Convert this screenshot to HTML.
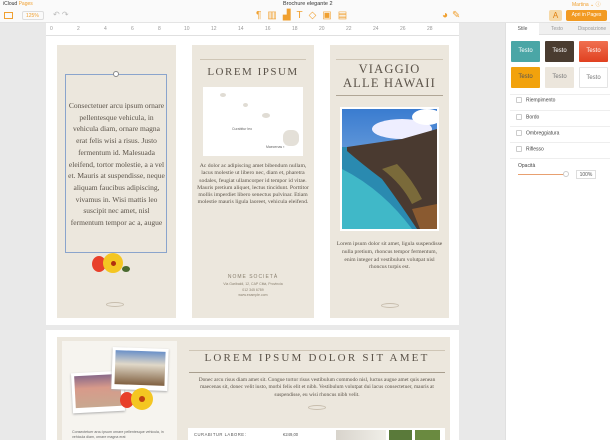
<!DOCTYPE html>
<html><head><meta charset="utf-8"><style>
*{margin:0;padding:0;box-sizing:border-box}
body{width:610px;height:440px;overflow:hidden;background:#fff;font-family:"Liberation Sans",sans-serif;position:relative}
.a{position:absolute}
.serif{font-family:"Liberation Serif",serif;color:#5a5248}
.panel{background:#ece7dd}
.ic{color:#f0a030;font-size:10px}
.ruler span{position:absolute;top:3px;font-size:5px;color:#999}
.sw{position:absolute;width:29px;height:21px;font-size:6px;text-align:center;line-height:21px;border-radius:1px}
.cb{position:absolute;left:516px;font-size:5px;color:#444}
.cb i{display:inline-block;width:6px;height:6px;border:1px solid #ccc;border-radius:1px;margin-right:4px;vertical-align:middle;background:#fff}
.hl{position:absolute;height:1px;background:#cfc6b6}
</style></head><body>
<div class="a" style="left:0;top:0;width:610px;height:9px;background:#fafafa"></div>
<div class="a" style="left:3px;top:1px;font-size:5px;color:#333">iCloud <span style="color:#f0a030">Pages</span></div>
<div class="a" style="left:283px;top:1px;font-size:5.5px;color:#333">Brochure elegante 2</div>
<div class="a" style="left:572px;top:1px;font-size:5px;color:#f0a030">Martina ⌄ ⓘ</div>
<div class="a" style="left:0;top:9px;width:610px;height:14px;background:#fafafa;border-bottom:1px solid #e4e4e4"></div>
<div class="a" style="left:4px;top:12px;width:9px;height:7px;border:1px solid #f0a030"></div>
<div class="a" style="left:22px;top:11px;width:22px;height:9px;border:1px solid #ddd;border-radius:2px;font-size:5px;color:#f0a030;line-height:8px;padding-left:3px">125% ⌄</div>
<div class="a ic" style="left:53px;top:10px;color:#bbb;font-size:8px">↶ ↷</div>
<div class="a ic" style="left:256px;top:10px;letter-spacing:6px">¶▥▟T◇▣▤</div>
<div class="a ic" style="left:442px;top:10px;letter-spacing:4px">◕✎</div>
<div class="a" style="left:549px;top:10px;width:13px;height:11px;background:#f6d9a8;border-radius:2px;font-size:8px;color:#e08010;text-align:center;line-height:11px">A</div>
<div class="a" style="left:566px;top:10px;width:41px;height:11px;background:#f29a22;border-radius:2px;font-size:5px;color:#fff;text-align:center;line-height:11px">Apri in Pages</div>
<div class="a" style="left:0;top:23px;width:46px;height:417px;background:#e9e9e9"></div>
<div class="a" style="left:459px;top:23px;width:46px;height:417px;background:#e9e9e9"></div>
<div class="a ruler" style="left:46px;top:23px;width:413px;height:13px;background:#fff;border-bottom:1px solid #e0e0e0">
<span style="left:4px">0</span><span style="left:31px">2</span><span style="left:58px">4</span><span style="left:85px">6</span><span style="left:112px">8</span><span style="left:138px">10</span><span style="left:165px">12</span><span style="left:192px">14</span><span style="left:219px">16</span><span style="left:246px">18</span><span style="left:273px">20</span><span style="left:300px">22</span><span style="left:327px">24</span><span style="left:354px">26</span><span style="left:381px">28</span>
</div>
<div class="a" style="left:46px;top:36px;width:413px;height:289px;background:#fff"></div>
<div class="a" style="left:46px;top:325px;width:413px;height:5px;background:#e9e9e9"></div>
<div class="a panel" style="left:57px;top:45px;width:119px;height:273px"></div>
<div class="a panel" style="left:192px;top:45px;width:122px;height:273px"></div>
<div class="a panel" style="left:330px;top:45px;width:119px;height:273px"></div>
<div class="a" style="left:65px;top:74px;width:102px;height:179px;border:1px solid #8aa4cc"></div>
<div class="a" style="left:113px;top:71px;width:6px;height:6px;border:1px solid #888;border-radius:50%;background:#fff"></div>
<div class="a serif" style="left:57px;top:100px;width:119px;font-size:7.5px;line-height:11.7px;text-align:center;white-space:nowrap">Consectetuer arcu ipsum ornare<br>pellentesque vehicula, in<br>vehicula diam, ornare magna<br>erat felis wisi a risus. Justo<br>fermentum id. Malesuada<br>eleifend, tortor molestie, a a vel<br>et. Mauris at suspendisse, neque<br>aliquam faucibus adipiscing,<br>vivamus in. Wisi mattis leo<br>suscipit nec amet, nisl<br>fermentum tempor ac a, augue</div>
<div class="a" style="left:92px;top:256px;width:14px;height:16px;background:#e8402a;border-radius:50%"></div>
<div class="a" style="left:103px;top:253px;width:20px;height:20px;background:#f4c622;border-radius:50%"></div>
<div class="a" style="left:111px;top:261px;width:5px;height:5px;background:#b03010;border-radius:50%"></div>
<div class="a" style="left:122px;top:266px;width:8px;height:6px;background:#4a6a30;border-radius:50%"></div>
<div class="a" style="left:106px;top:302px;width:18px;height:5px;border:1px solid #c8beae;border-radius:50%"></div>
<div class="hl" style="left:200px;top:59px;width:106px"></div>
<div class="a serif" style="left:192px;top:66px;width:122px;text-align:center;font-size:11px;letter-spacing:1.5px">LOREM IPSUM</div>
<div class="a" style="left:203px;top:87px;width:100px;height:69px;background:#fff"></div>
<div class="a" style="left:283px;top:130px;width:16px;height:16px;background:#e4e0d8;border-radius:40%"></div>
<div class="a" style="left:220px;top:93px;width:6px;height:4px;background:#e0dcd4;border-radius:50%"></div>
<div class="a" style="left:243px;top:103px;width:5px;height:4px;background:#e0dcd4;border-radius:50%"></div>
<div class="a" style="left:262px;top:113px;width:8px;height:5px;background:#e0dcd4;border-radius:50%"></div>
<div class="a" style="left:232px;top:127px;font-size:3.5px;color:#666">Curabitur leo</div>
<div class="a" style="left:266px;top:145px;font-size:3.5px;color:#666">Maecenas ▪</div>
<div class="a serif" style="left:196px;top:163px;width:114px;font-size:5.7px;line-height:7.3px;text-align:center">Ac dolor ac adipiscing amet bibendum nullam, lacus molestie ut libero nec, diam et, pharetra sodales, feugiat ullamcorper id tempor id vitae. Mauris pretium aliquet, lectus tincidunt. Porttitor mollis imperdiet libero senectus pulvinar. Etiam molestie mauris ligula laoreet, vehicula eleifend.</div>
<div class="a" style="left:192px;top:274px;width:122px;text-align:center;font-size:5px;letter-spacing:1px;color:#8a8070">NOME SOCIETÀ</div>
<div class="a" style="left:192px;top:282px;width:122px;text-align:center;font-size:3.5px;line-height:5.5px;color:#8a8070">Via Garibaldi, 12, CAP Città, Provincia<br>012 345 6789<br>www.example.com</div>
<div class="hl" style="left:336px;top:59px;width:107px"></div>
<div class="a serif" style="left:330px;top:62px;width:119px;text-align:center;font-size:12.5px;line-height:14px;letter-spacing:1.2px">VIAGGIO<br>ALLE HAWAII</div>
<div class="hl" style="left:336px;top:95px;width:107px;background:#b0a696"></div>
<div class="a" style="left:340px;top:107px;width:99px;height:124px;background:#fff;padding:2px">
<svg width="95" height="120" viewBox="0 0 95 120"><defs><linearGradient id="s" x1="0" y1="0" x2="0" y2="1"><stop offset="0" stop-color="#3a7cd0"/><stop offset="1" stop-color="#a8c8e8"/></linearGradient></defs><rect width="95" height="120" fill="url(#s)"/><ellipse cx="60" cy="20" rx="30" ry="10" fill="#eef"/><ellipse cx="85" cy="8" rx="15" ry="8" fill="#fff"/><rect y="38" width="95" height="82" fill="#2a8ab0"/><path d="M0 60 Q40 80 70 120 L0 120Z" fill="#40b8c8"/><path d="M5 38 L60 30 L95 20 L95 120 L75 120 Q55 90 40 70 Q20 55 5 42Z" fill="#4a3a30"/><path d="M40 60 Q60 75 70 95 L80 90 Q70 70 55 55Z" fill="#7a6a3a"/><path d="M70 100 L95 95 L95 120 L78 120Z" fill="#8a5a30"/></svg></div>
<div class="a serif" style="left:336px;top:241px;width:107px;font-size:5.6px;line-height:7.8px;text-align:center">Lorem ipsum dolor sit amet, ligula suspendisse nulla pretium, rhoncus tempor fermentum, enim integer ad vestibulum volutpat nisl rhoncus turpis est.</div>
<div class="a" style="left:381px;top:303px;width:18px;height:5px;border:1px solid #c8beae;border-radius:50%"></div>
<div class="a" style="left:46px;top:330px;width:413px;height:110px;background:#fff"></div>
<div class="a panel" style="left:57px;top:337px;width:393px;height:103px"></div>
<div class="a" style="left:62px;top:341px;width:115px;height:99px;background:#f6f4ef"></div>
<div class="a" style="left:72px;top:372px;width:52px;height:40px;background:#fff;transform:rotate(-3deg);box-shadow:0 1px 2px #aaa"><div style="margin:3px;height:32px;background:linear-gradient(#8a6a8a,#d89a8a 40%,#c8a890)"></div></div>
<div class="a" style="left:112px;top:348px;width:56px;height:42px;background:#fff;transform:rotate(2deg);box-shadow:0 1px 2px #aaa"><div style="margin:3px;height:34px;background:linear-gradient(#6a90c8,#e0d8c8 40%,#806040)"></div></div>
<div class="a" style="left:120px;top:392px;width:14px;height:16px;background:#e8402a;border-radius:50%"></div>
<div class="a" style="left:131px;top:388px;width:22px;height:22px;background:#f4c622;border-radius:50%"></div>
<div class="a" style="left:139px;top:396px;width:6px;height:6px;background:#c04010;border-radius:50%"></div>
<div class="a" style="left:72px;top:430px;width:95px;font-size:3.6px;line-height:5px;color:#666">Consectetuer arcu ipsum ornare pellentesque vehicula, in vehicula diam, ornare magna erat</div>
<div class="hl" style="left:189px;top:350px;width:256px"></div>
<div class="a serif" style="left:186px;top:352px;width:262px;text-align:center;font-size:11px;letter-spacing:2.2px">LOREM IPSUM DOLOR SIT AMET</div>
<div class="hl" style="left:189px;top:372px;width:256px;background:#a89e8e"></div>
<div class="a serif" style="left:189px;top:377px;width:256px;font-size:5.4px;line-height:7.4px;text-align:center">Donec arcu risus diam amet sit. Congue tortor risus vestibulum commodo nisl, luctus augue amet quis aenean maecenas sit, donec velit iusto, morbi felis elit et nibh. Vestibulum volutpat dui lacus consectetuer, mauris at suspendisse, eu wisi rhoncus nibh velit.</div>
<div class="a" style="left:308px;top:405px;width:18px;height:5px;border:1px solid #c8beae;border-radius:50%"></div>
<div class="a" style="left:188px;top:428px;width:257px;height:12px;background:#fff"></div>
<div class="a" style="left:194px;top:432px;font-size:4.2px;letter-spacing:.5px;color:#555">CURABITUR LABORE:</div>
<div class="a" style="left:283px;top:432px;font-size:4.2px;color:#555">€249,00</div>
<div class="a" style="left:336px;top:430px;width:50px;height:10px;background:linear-gradient(90deg,#d8d4cc,#f0eee8)"></div>
<div class="a" style="left:389px;top:430px;width:23px;height:10px;background:#5a7a3a"></div>
<div class="a" style="left:415px;top:430px;width:25px;height:10px;background:#6a8a40"></div>
<div class="a" style="left:505px;top:23px;width:105px;height:417px;background:#fff;border-left:1px solid #e0e0e0"></div>
<div class="a" style="left:506px;top:23px;width:104px;height:12px;background:#f0f0f0;border-bottom:1px solid #e0e0e0"></div>
<div class="a" style="left:506px;top:23px;width:33px;height:13px;background:#fff;font-size:5px;color:#555;text-align:center;line-height:13px">Stile</div>
<div class="a" style="left:540px;top:23px;width:34px;height:12px;font-size:5px;color:#999;text-align:center;line-height:12px">Testo</div>
<div class="a" style="left:574px;top:23px;width:36px;height:12px;font-size:5px;color:#999;text-align:center;line-height:12px">Disposizione</div>
<div class="sw" style="left:511px;top:41px;background:#4aa6a6;color:#fff">Testo</div>
<div class="sw" style="left:545px;top:41px;background:#4a3c30;color:#fff">Testo</div>
<div class="sw" style="left:579px;top:41px;background:linear-gradient(#f07050,#e04020);color:#fff">Testo</div>
<div class="sw" style="left:511px;top:67px;background:#f2a20c;color:#555">Testo</div>
<div class="sw" style="left:545px;top:67px;background:#ece6dc;color:#777">Testo</div>
<div class="sw" style="left:579px;top:67px;background:#fff;border:1px solid #e4e4e4;color:#777">Testo</div>
<div class="a" style="left:510px;top:94px;width:100px;height:1px;background:#eee"></div>
<div class="cb" style="top:97px"><i></i>Riempimento</div>
<div class="a" style="left:510px;top:110px;width:100px;height:1px;background:#eee"></div>
<div class="cb" style="top:114px"><i></i>Bordo</div>
<div class="a" style="left:510px;top:126px;width:100px;height:1px;background:#eee"></div>
<div class="cb" style="top:130px"><i></i>Ombreggiatura</div>
<div class="a" style="left:510px;top:142px;width:100px;height:1px;background:#eee"></div>
<div class="cb" style="top:146px"><i></i>Riflesso</div>
<div class="a" style="left:510px;top:158px;width:100px;height:1px;background:#eee"></div>
<div class="a" style="left:518px;top:163px;font-size:5px;color:#444">Opacità</div>
<div class="a" style="left:518px;top:174px;width:47px;height:1px;background:#e8a070"></div>
<div class="a" style="left:563px;top:171px;width:6px;height:6px;border:1px solid #ccc;border-radius:50%;background:#fff"></div>
<div class="a" style="left:576px;top:170px;width:20px;height:9px;border:1px solid #ddd;font-size:5px;color:#555;text-align:center;line-height:8px">100%</div>
</body></html>
